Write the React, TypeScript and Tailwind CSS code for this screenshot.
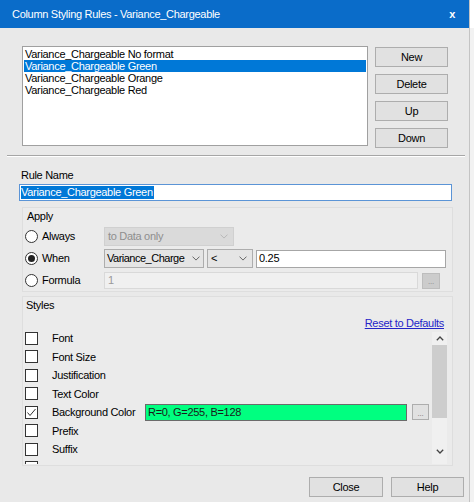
import React from "react";

function Chev({ c = "#555" }: { c?: string }) {
  return (
    <svg width="8" height="5" viewBox="0 0 8 5" className="shrink-0">
      <polyline points="0.5,0.6 4,4.1 7.5,0.6" fill="none" stroke={c} strokeWidth="1" />
    </svg>
  );
}

function Radio({ on }: { on?: boolean }) {
  return (
    <div className="w-[13px] h-[13px] shrink-0 rounded-full border border-[#333] bg-white flex items-center justify-center">
      {on && <div className="w-[7px] h-[7px] rounded-full bg-[#222]" />}
    </div>
  );
}

function Check({ on }: { on?: boolean }) {
  return (
    <div className="w-[13px] h-[13px] shrink-0 border border-[#333] bg-white flex items-center justify-center">
      {on && (
        <svg width="11" height="11" viewBox="0 0 11 11">
          <polyline points="1.5,5.5 4,8.5 9.5,2" fill="none" stroke="#333" strokeWidth="1" />
        </svg>
      )}
    </div>
  );
}

function Btn({ label, w }: { label: string; w: string }) {
  return (
    <div className={`${w} h-[20px] bg-[#e1e1e1] border border-[#adadad] flex items-center justify-center`}>
      {label}
    </div>
  );
}

export default function App() {
  const items = [
    "Variance_Chargeable No format",
    "Variance_Chargeable Green",
    "Variance_Chargeable Orange",
    "Variance_Chargeable Red",
  ];
  const styles = [
    "Font",
    "Font Size",
    "Justification",
    "Text Color",
    "Background Color",
    "Prefix",
    "Suffix",
    "",
  ];
  return (
    <div className="w-[474px] h-[502px] flex bg-[#f7f7f7] font-['Liberation_Sans',Arial,sans-serif] text-[11px] tracking-[-0.3px] text-black overflow-hidden">
      <div className="w-[470px] h-[502px] shrink-0 flex flex-col bg-[#e9e9e9] border-r border-[#c4c4c4]">
        <div className="h-[28px] shrink-0 bg-[#0a6cc9] flex items-center pl-[12px] pr-[14px] text-white">
          <span className="flex-1 text-[11px] tracking-[-0.3px]">Column Styling Rules - Variance_Chargeable</span>
          <span className="text-[11px] font-bold">x</span>
        </div>

        <div className="flex mt-[18px] pl-[22px]">
          <div className="w-[346px] h-[100px] bg-white border border-[#a0a0a0] pt-[1px] px-[1px]">
            {items.map((t, i) => (
              <div
                key={t}
                className={`h-[12px] leading-[12px] pl-[1px] whitespace-nowrap ${i === 1 ? "bg-[#0078d7] text-white" : ""}`}
              >
                {t}
              </div>
            ))}
          </div>
          <div className="ml-[7px] mt-[1px] flex flex-col gap-[7px]">
            <Btn label="New" w="w-[73px]" />
            <Btn label="Delete" w="w-[73px]" />
            <Btn label="Up" w="w-[73px]" />
            <Btn label="Down" w="w-[73px]" />
          </div>
        </div>

        <div className="mt-[7px] ml-[7px] mr-[4px] h-[2px] border-t border-[#a6a6a6] border-b border-b-white" />

        <div className="mt-[11px] pl-[21px] leading-[14px]">Rule Name</div>
        <div className="mt-[2px] ml-[19px] w-[433px] h-[17px] border border-[#5b94d6] bg-white flex items-center pl-[1px]">
          <span className="bg-[#0078d7] text-white leading-[13px] pr-[1px]">Variance_Chargeable Green</span>
        </div>

        <div className="mt-[6px] ml-[22px] w-[431px] h-[85px] border border-[#dedede] bg-[#ebebeb] flex flex-col">
          <div className="pl-[4px] pt-[1px] leading-[14px]">Apply</div>
          <div className="mt-[4px] flex flex-col gap-[3px] pl-[2px]">
            <div className="h-[19px] flex items-center">
              <Radio />
              <span className="ml-[4px] w-[62px]">Always</span>
              <div className="w-[130px] h-[19px] bg-[#dadada] border border-[#d0d0d0] text-[#8e8e8e] flex items-center justify-between pl-[3px] pr-[5px]">
                <span>to Data only</span>
                <Chev c="#b8b8b8" />
              </div>
            </div>
            <div className="h-[19px] flex items-center">
              <Radio on />
              <span className="ml-[4px] w-[62px]">When</span>
              <div className="w-[100px] h-[19px] bg-[#e5e5e5] border border-[#adadad] flex items-center justify-between pl-[2px] pr-[3px]">
                <span className="tracking-[-0.5px] whitespace-nowrap">Variance_Charge</span>
                <Chev c="#666" />
              </div>
              <div className="ml-[3px] w-[46px] h-[19px] bg-[#e5e5e5] border border-[#adadad] flex items-center justify-between pl-[3px] pr-[5px]">
                <span>&lt;</span>
                <Chev c="#666" />
              </div>
              <div className="ml-[3px] w-[190px] h-[18px] bg-white border border-[#a6a6a6] flex items-center pl-[2px]">
                0.25
              </div>
            </div>
            <div className="h-[19px] flex items-center">
              <Radio />
              <span className="ml-[4px] w-[62px]">Formula</span>
              <div className="w-[314px] h-[17px] bg-[#f0f0f0] border border-[#d9d9d9] text-[#9a9a9a] flex items-center pl-[3px]">
                1
              </div>
              <div className="ml-[4px] w-[18px] h-[16px] bg-[#cccccc] border border-[#bdbdbd] text-[#8a8a8a] flex items-center justify-center text-[8px] leading-none pt-[3px]">
                ...
              </div>
            </div>
          </div>
        </div>

        <div className="mt-[4px] ml-[22px] w-[431px] h-[170px] border border-[#dedede] bg-[#ebebeb] flex flex-col">
          <div className="pl-[3px] pt-[1px] leading-[14px]">Styles</div>
          <div className="mt-[5px] flex justify-end pr-[8px] leading-[12px]">
            <span className="text-[#2424c8] underline">Reset to Defaults</span>
          </div>
          <div className="flex items-start">
            <div className="flex-1 h-[135px] overflow-hidden pl-[2px] flex flex-col">
              {styles.map((s, i) => (
                <div key={i} className="h-[18.5px] shrink-0 flex items-center">
                  <Check on={i === 4} />
                  {s && <span className="ml-[14px] w-[93px] whitespace-nowrap">{s}</span>}
                  {i === 4 && (
                    <>
                      <div className="w-[262px] h-[17px] bg-[#00ff80] border border-[#6b6b6b] flex items-center pl-[2px] text-[#1a1a1a]">
                        R=0, G=255, B=128
                      </div>
                      <div className="ml-[5px] w-[17px] h-[16px] bg-[#e1e1e1] border border-[#adadad] text-[#777] flex items-center justify-center text-[8px] leading-none pt-[3px]">
                        ...
                      </div>
                    </>
                  )}
                </div>
              ))}
            </div>
            <div className="mt-[3px] mr-[5px] w-[15px] h-[132px] bg-[#f0f0f0] flex flex-col">
              <div className="h-[13px] flex items-center justify-center">
                <svg width="8" height="5" viewBox="0 0 8 5">
                  <polyline points="0.8,4.2 4,1 7.2,4.2" fill="none" stroke="#444" strokeWidth="1.3" />
                </svg>
              </div>
              <div className="h-[73px] bg-[#cdcdcd]" />
              <div className="flex-1" />
              <div className="h-[20px] flex items-start justify-center pt-[5px]">
                <svg width="8" height="5" viewBox="0 0 8 5">
                  <polyline points="0.8,0.8 4,4 7.2,0.8" fill="none" stroke="#444" strokeWidth="1.3" />
                </svg>
              </div>
            </div>
          </div>
        </div>

        <div className="mt-[11px] flex justify-end pr-[5px] gap-[8px]">
          <Btn label="Close" w="w-[74px]" />
          <Btn label="Help" w="w-[73px]" />
        </div>
      </div>
      <div className="flex-1 flex flex-col">
        <div className="h-[28px] bg-[#ffffff]" />
        <div className="flex-1 bg-[#f2f2f2]" />
      </div>
    </div>
  );
}
